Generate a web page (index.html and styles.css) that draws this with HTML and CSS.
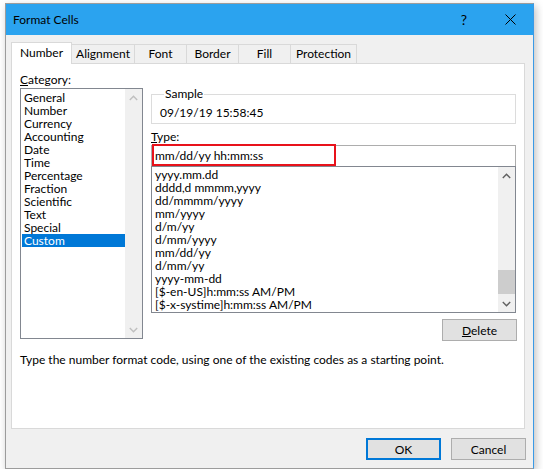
FILE: index.html
```html
<!DOCTYPE html>
<html lang="en">
  <head>
    <meta charset="UTF-8" />
    <title>Format Cells</title>
    <link rel="stylesheet" href="styles.css">
  </head>
  <body>
    <div class="window">
      <!-- 제목 표시줄 -->
      <div class="titlebar">
        <span class="title">Format Cells</span>
        <span class="caption-btn help">?</span>
        <span class="caption-btn close">
          <svg width="11" height="11" viewBox="0 0 11 11">
            <path d="M0.5 0.5 L10.5 10.5 M10.5 0.5 L0.5 10.5" stroke="#000" stroke-width="1" fill="none" />
          </svg>
        </span>
      </div>

      <div class="content">
        <!-- 탭 -->
        <div class="tabs">
          <div class="tab active" style="width: 61px">Number</div>
          <div class="tab" style="width: 64px">Alignment</div>
          <div class="tab" style="width: 53px">Font</div>
          <div class="tab" style="width: 53px">Border</div>
          <div class="tab" style="width: 53px">Fill</div>
          <div class="tab" style="width: 67px">Protection</div>
        </div>

        <div class="panel">
          <div class="columns">
            <div class="left">
              <div class="label"><u>C</u>ategory:</div>
              <div class="listbox category">
                <div class="items">
                  <div class="item">General</div>
                  <div class="item">Number</div>
                  <div class="item">Currency</div>
                  <div class="item">Accounting</div>
                  <div class="item">Date</div>
                  <div class="item">Time</div>
                  <div class="item">Percentage</div>
                  <div class="item">Fraction</div>
                  <div class="item">Scientific</div>
                  <div class="item">Text</div>
                  <div class="item">Special</div>
                  <div class="item selected">Custom</div>
                </div>
                <div class="scrollbar disabled">
                  <div class="arrow">
                    <svg width="9" height="6" viewBox="0 0 9 6"><path d="M0.8 5 L4.5 1.3 L8.2 5" /></svg>
                  </div>
                  <div class="track"></div>
                  <div class="arrow">
                    <svg width="9" height="6" viewBox="0 0 9 6"><path d="M0.8 1 L4.5 4.7 L8.2 1" /></svg>
                  </div>
                </div>
              </div>
            </div>

            <div class="right">
              <fieldset class="sample">
                <legend>Sample</legend>
                <div class="sample-value">09/19/19 15:58:45</div>
              </fieldset>

              <div class="label type-label"><u>T</u>ype:</div>
              <div class="type-input">
                mm/dd/yy hh:mm:ss
                <span class="highlight"></span>
              </div>
              <div class="listbox formats">
                <div class="items">
                  <div class="item">yyyy.mm.dd</div>
                  <div class="item">dddd,d mmmm,yyyy</div>
                  <div class="item">dd/mmmm/yyyy</div>
                  <div class="item">mm/yyyy</div>
                  <div class="item">d/m/yy</div>
                  <div class="item">d/mm/yyyy</div>
                  <div class="item">mm/dd/yy</div>
                  <div class="item">d/mm/yy</div>
                  <div class="item">yyyy-mm-dd</div>
                  <div class="item">[$-en-US]h:mm:ss AM/PM</div>
                  <div class="item">[$-x-systime]h:mm:ss AM/PM</div>
                </div>
                <div class="scrollbar">
                  <div class="arrow">
                    <svg width="9" height="6" viewBox="0 0 9 6"><path d="M0.8 5 L4.5 1.3 L8.2 5" /></svg>
                  </div>
                  <div class="track">
                    <div class="thumb"></div>
                  </div>
                  <div class="arrow">
                    <svg width="9" height="6" viewBox="0 0 9 6"><path d="M0.8 1 L4.5 4.7 L8.2 1" /></svg>
                  </div>
                </div>
              </div>
              <div class="delete-row">
                <button class="btn"><u>D</u>elete</button>
              </div>
            </div>
          </div>

          <p class="hint">Type the number format code, using one of the existing codes as a starting point.</p>
        </div>
      </div>

      <!-- 하단 버튼 -->
      <div class="footer">
        <button class="btn default">OK</button>
        <button class="btn">Cancel</button>
      </div>
    </div>
  </body>
</html>
```

FILE: styles.css
```css
body {
  margin: 0;
  background: #fff;
  font-family: "Lato", "Noto Sans", sans-serif;
  font-size: 12px;
  color: #000;
}

.window {
  display: flex;
  flex-direction: column;
  box-sizing: border-box;
  width: 529px;
  height: 466px;
  margin: 3px 0 0 5px;
  background: #f0f0f0;
  border: 1px solid #9c9c9c;
  border-right-color: #3a9ae6;
  box-shadow: 2px 3px 8px rgba(0, 0, 0, 0.25);
}

.titlebar {
  display: flex;
  align-items: center;
  height: 31px;
  padding-left: 7px;
  background: #2ba3ef;
}

.title {
  flex: 1;
  font-size: 12px;
}

.caption-btn {
  display: flex;
  justify-content: center;
  align-items: center;
  width: 46px;
  height: 31px;
}

.help {
  font-size: 14px;
}

.content {
  padding: 7px 8px 0 5px;
}

.tabs {
  display: flex;
  align-items: flex-end;
  height: 21px;
}

.tab {
  box-sizing: border-box;
  height: 19px;
  margin-right: -1px;
  line-height: 18px;
  text-align: center;
  background: #f0f0f0;
  border: 1px solid #d9d9d9;
  border-bottom: none;
}

.tab.active {
  position: relative;
  z-index: 1;
  height: 22px;
  margin-bottom: -1px;
  line-height: 19px;
  background: #fff;
}

.panel {
  box-sizing: border-box;
  height: 366px;
  padding: 8px 8px 0 8px;
  background: #fff;
  border: 1px solid #d9d9d9;
}

.columns {
  display: flex;
  gap: 8px;
}

.left {
  width: 123px;
}

.right {
  width: 365px;
}

.label {
  line-height: 16px;
}

.listbox {
  display: flex;
  box-sizing: border-box;
  background: #fff;
  border: 1px solid #828790;
}

.listbox.category {
  height: 251px;
}

.listbox.formats {
  height: 147px;
}

.items {
  flex: 1;
  padding-top: 2px;
}

.formats .items {
  padding-top: 1px;
}

.item {
  height: 13px;
  line-height: 13px;
  padding-left: 3px;
  white-space: nowrap;
}

.category .item {
  margin-left: 1px;
  padding-left: 2px;
}

.item.selected {
  background: #0078d7;
  color: #fff;
}

.scrollbar {
  display: flex;
  flex-direction: column;
  width: 17px;
  background: #f0f0f0;
}

.arrow {
  display: flex;
  justify-content: center;
  align-items: center;
  height: 17px;
}

.arrow path {
  fill: none;
  stroke: #606060;
  stroke-width: 1.4;
}

.scrollbar.disabled .arrow path {
  stroke: #bfbfbf;
}

.track {
  flex: 1;
  display: flex;
  flex-direction: column;
  justify-content: flex-end;
}

.thumb {
  height: 24px;
  margin-bottom: 1px;
  background: #cdcdcd;
}

.sample {
  margin: 14px 0 0 0;
  padding: 3px 8px 2px 8px;
  border: 1px solid #dcdcdc;
}

.sample legend {
  padding: 0 1px;
  margin-left: 4px;
  line-height: 16px;
}

.sample-value {
  line-height: 16px;
}

.type-label {
  margin-top: 5px;
}

.type-input {
  position: relative;
  box-sizing: border-box;
  height: 21px;
  padding-left: 3px;
  line-height: 19px;
  border: 1px solid #adadad;
  border-bottom: none;
}

/* 강조 표시 빨간 박스 */
.highlight {
  position: absolute;
  left: 0;
  top: -2px;
  width: 184px;
  height: 22px;
  border: 2px solid #e8121b;
  box-sizing: border-box;
}

.delete-row {
  display: flex;
  justify-content: flex-end;
  margin-top: 6px;
  margin-right: -1px;
}

.btn {
  box-sizing: border-box;
  width: 75px;
  height: 22px;
  padding: 0;
  font-family: inherit;
  font-size: 12px;
  color: #000;
  background: #e1e1e1;
  border: 1px solid #adadad;
}

.hint {
  margin: 11px 0 0 0;
  line-height: 16px;
}

.footer {
  display: flex;
  justify-content: flex-end;
  gap: 10px;
  padding: 9px 7px 0 0;
}

.btn.default {
  border: 2px solid #0078d7;
}
```
